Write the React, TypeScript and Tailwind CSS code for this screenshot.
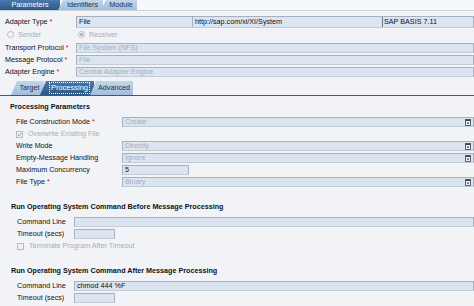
import React from 'react';

// SAP PI communication channel – File adapter, "Processing" tab

function SelectIcon() {
  return (
    <svg width="6" height="7" viewBox="0 0 6 7" className="ml-auto mr-[2px] shrink-0">
      <rect x="0.5" y="0.5" width="5" height="6" fill="#f4f6f8" stroke="#5a6470" />
      <rect x="0.5" y="0.5" width="5" height="1.5" fill="#3a4450" />
      <path d="M1.5 3.5 L4.5 3.5 L3 5.5 Z" fill="#3a4450" />
    </svg>
  );
}

type FieldProps = {
  value?: string;
  muted?: boolean;
  select?: boolean;
  className?: string;
};

function Field({ value = '', muted = false, select = false, className = 'flex-1' }: FieldProps) {
  return (
    <div
      className={`flex h-[10px] items-center border border-[#a7b0bc] border-b-[#c4ccd6] bg-[#dbe5f1] pl-[2px] ${className}`}
    >
      <span className={muted ? 'text-[#a4aebb]' : 'text-[#111]'}>{value}</span>
      {select && <SelectIcon />}
    </div>
  );
}

function Row({ label, req = false, labelW, children }: { label: string; req?: boolean; labelW: string; children: React.ReactNode }) {
  return (
    <div className="flex h-[12px] items-center">
      <div className={`${labelW} shrink-0 text-[#111]`}>
        {label}
        {req && <span className="text-[#d0021b]"> *</span>}
      </div>
      {children}
    </div>
  );
}

function Checkbox({ checked }: { checked: boolean }) {
  return (
    <svg width="7" height="7" viewBox="0 0 7 7" className="mr-[5px] shrink-0">
      <rect x="0.5" y="0.5" width="6" height="6" fill="#eef1f5" stroke="#b3bbc6" />
      {checked && <path d="M1.7 3.6 L3 4.9 L5.4 2" fill="none" stroke="#8e98a6" strokeWidth="1" />}
    </svg>
  );
}

function Radio({ checked }: { checked: boolean }) {
  return (
    <svg width="7" height="7" viewBox="0 0 7 7" className="mr-[4px] shrink-0">
      <circle cx="3.5" cy="3.5" r="3" fill="#f3f5f8" stroke="#b3bbc6" />
      {checked && <circle cx="3.5" cy="3.5" r="1.5" fill="#9aa4b1" />}
    </svg>
  );
}

const panelLabels = [
  { label: 'Write Mode', value: 'Directly', select: true },
  { label: 'Empty-Message Handling', value: 'Ignore', select: true },
];

export default function App() {
  return (
    <div className="h-[306px] w-[474px] overflow-hidden bg-[#f2f3f7] font-['Liberation_Sans',Arial,sans-serif] text-[7.2px] leading-none">
      {/* Top tab strip */}
      <div className="flex h-[10px] items-stretch bg-[#f7f8fa]">
        <div className="flex w-[60px] items-center justify-center bg-gradient-to-b from-[#4a7aab] to-[#2b5986] text-white">
          Parameters
        </div>
        <div className="-ml-[2px] flex w-[45px] items-center justify-center bg-gradient-to-b from-[#c3d6ea] to-[#a3bedb] pl-[4px] text-[#1c2f44] [clip-path:polygon(5px_0,100%_0,100%_100%,0_100%)]">
          Identifiers
        </div>
        <div className="-ml-[2px] flex w-[36px] items-center justify-center bg-gradient-to-b from-[#c3d6ea] to-[#a3bedb] pl-[4px] text-[#1c2f44] [clip-path:polygon(5px_0,100%_0,100%_100%,0_100%)]">
          Module
        </div>
      </div>
      <div className="h-px bg-[#c9d3de]" />

      {/* Header fields */}
      <div className="pl-[5px] pt-[5px]">
        <div className="flex h-[12px] items-center">
          <div className="w-[71px] shrink-0 text-[#111]">
            Adapter Type<span className="text-[#d0021b]"> *</span>
          </div>
          <div className="flex h-[12px] flex-1 items-stretch border border-[#a7b0bc] border-b-[#c4ccd6] bg-[#dbe5f1]">
            <div className="flex w-[115px] items-center pl-[2px] text-[#111]">File</div>
            <div className="flex w-[190px] items-center border-l border-[#a7b0bc] pl-[2px] text-[#111]">
              http://sap.com/xi/XI/System
            </div>
            <div className="flex flex-1 items-center border-l border-[#6d7783] pl-[1px] text-[#111]">SAP BASIS 7.11</div>
          </div>
        </div>
        <div className="flex h-[14px] items-center text-[#a4aebb]">
          <div className="flex w-[71px] items-center pl-[2px]">
            <Radio checked={false} />
            Sender
          </div>
          <div className="flex items-center pl-[2px]">
            <Radio checked />
            Receiver
          </div>
        </div>
        <Row label="Transport Protocol" req labelW="w-[71px]">
          <Field value="File System (NFS)" muted />
        </Row>
        <Row label="Message Protocol" req labelW="w-[71px]">
          <Field value="File" muted />
        </Row>
        <Row label="Adapter Engine" req labelW="w-[71px]">
          <Field value="Central Adapter Engine" muted />
        </Row>
      </div>

      {/* Inner tab strip */}
      <div className="mt-[3px] flex h-[14px] items-stretch pl-[11px]">
        <div className="flex w-[33px] items-center justify-center bg-gradient-to-b from-[#c3d6ea] to-[#a3bedb] pl-[4px] text-[#1c2f44] [clip-path:polygon(6px_0,100%_0,100%_100%,0_100%)]">
          Target
        </div>
        <div className="-ml-[4px] flex w-[54px] items-center justify-center bg-gradient-to-b from-[#4a7aab] to-[#2b5986] pl-[5px] text-white [clip-path:polygon(6px_0,100%_0,100%_100%,0_100%)]">
          <span className="border border-dotted border-white px-px py-px text-[7.5px]">Processing</span>
        </div>
        <div className="-ml-[4px] flex w-[43px] items-center justify-center bg-gradient-to-b from-[#c3d6ea] to-[#a3bedb] pl-[5px] text-[#1c2f44] [clip-path:polygon(6px_0,100%_0,100%_100%,0_100%)]">
          Advanced
        </div>
      </div>
      <div className="h-px bg-[#2e5c8c]" />

      {/* Processing panel */}
      <div className="pt-[5px]">
        <div className="flex h-[12px] items-center pl-[10px] font-bold text-[#111]">Processing Parameters</div>
        <div className="mt-[3px] pl-[16px]">
          <Row label="File Construction Mode" req labelW="w-[106px]">
            <Field value="Create" muted select />
          </Row>
          <div className="flex h-[12px] items-center text-[#a4aebb]">
            <Checkbox checked />
            Overwrite Existing File
          </div>
          {panelLabels.map((p) => (
            <Row key={p.label} label={p.label} labelW="w-[106px]">
              <Field value={p.value} muted select={p.select} />
            </Row>
          ))}
          <Row label="Maximum Concurrency" labelW="w-[106px]">
            <Field value="5" className="w-[67px]" />
          </Row>
          <Row label="File Type" req labelW="w-[106px]">
            <Field value="Binary" muted select />
          </Row>
        </div>

        <div className="mt-[13px] flex h-[12px] items-center pl-[11px] font-bold text-[#111]">
          Run Operating System Command Before Message Processing
        </div>
        <div className="mt-[3px] pl-[17px]">
          <Row label="Command Line" labelW="w-[57px]">
            <Field />
          </Row>
          <Row label="Timeout (secs)" labelW="w-[57px]">
            <Field className="w-[41px]" />
          </Row>
          <div className="flex h-[12px] items-center text-[#a4aebb]">
            <Checkbox checked={false} />
            Terminate Program After Timeout
          </div>
        </div>

        <div className="mt-[13px] flex h-[12px] items-center pl-[11px] font-bold text-[#111]">
          Run Operating System Command After Message Processing
        </div>
        <div className="mt-[3px] pl-[17px]">
          <Row label="Command Line" labelW="w-[57px]">
            <Field value="chmod 444 %F" />
          </Row>
          <Row label="Timeout (secs)" labelW="w-[57px]">
            <Field className="w-[41px]" />
          </Row>
        </div>
      </div>
    </div>
  );
}
